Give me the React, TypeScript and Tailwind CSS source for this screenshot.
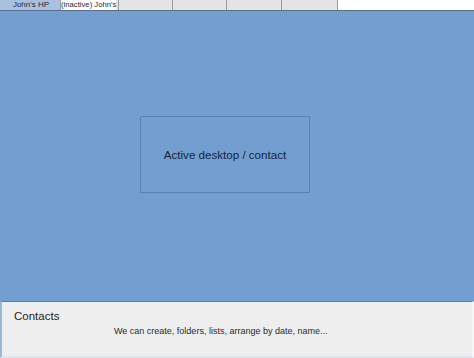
import React from "react"

const cells = [54, 54, 55, 56]

export default function App() {
    return (
        <div className="flex h-[358px] w-[474px] flex-col overflow-hidden bg-[#729fcf] font-['Liberation_Sans',Arial,sans-serif]">
            {/* Tab strip */}
            <div className="flex h-[11px] shrink-0 border-b border-[#4f6f94] bg-white text-[8px] leading-[10px] text-[#1a2a44]">
                <div className="flex w-[60px] items-center justify-center whitespace-nowrap bg-[#a9c1df] pl-[2px]">John&apos;s HP</div>
                <div className="flex w-[58px] items-center whitespace-nowrap border-l border-[#9a9a9a] bg-[#e4e4e4]">
                    <span className="bg-white text-[7.7px]">(inactive) John&apos;s</span>
                </div>
                {cells.map((w, i) => (
                    <div key={i} style={{ width: w }} className="border-l border-[#9a9a9a] bg-[#e4e4e4]" />
                ))}
                <div className="flex-1 border-l border-[#9a9a9a] bg-white" />
            </div>

            {/* Desktop area */}
            <div className="flex-1">
                <div className="ml-[140px] mt-[105px] flex h-[77px] w-[170px] items-center justify-center border border-[#5a82b0] text-[11.6px] text-[#16233d]">
                    Active desktop / contact
                </div>
            </div>

            {/* Info panel */}
            <div className="flex h-[57px] shrink-0 flex-col border-t border-[#5b7fa8] border-l-2 border-l-[#9fb6d3] border-b-2 border-b-[#dbe5ef] border-r-2 border-r-[#f6f6f6] bg-[#eeeeee] text-[#1e1e1e]">
                <div className="pl-[12px] pt-[7px] text-[11.5px] leading-[14px]">Contacts</div>
                <div className="pl-[112px] pt-[2px] text-[9px] leading-[12px] text-[#2a2a2a]">
                    We can create, folders, lists, arrange by date, name...
                </div>
            </div>
        </div>
    )
}
